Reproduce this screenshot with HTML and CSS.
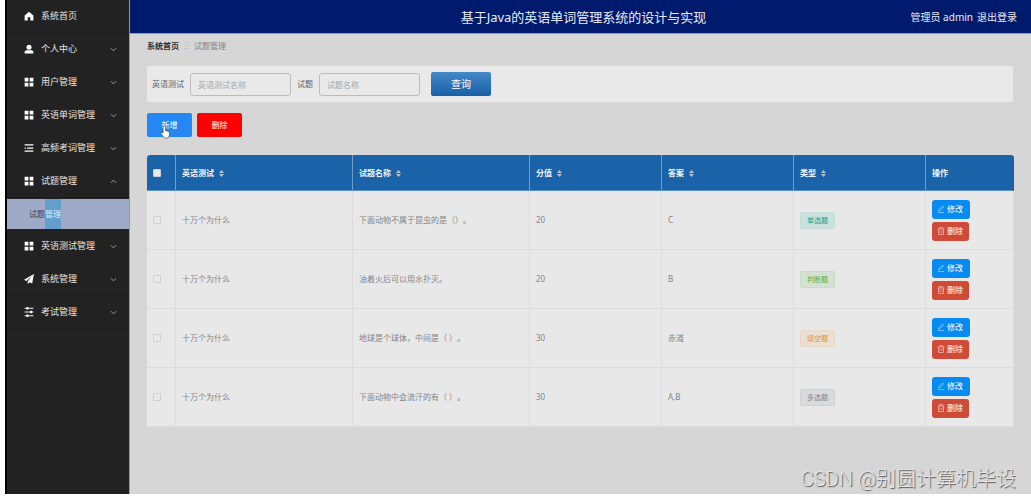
FILE: index.html
```
<!DOCTYPE html>
<html lang="zh-CN">
<head>
    <meta charset="UTF-8">
    <meta name="viewport" content="width=device-width, initial-scale=1.0">
    <title>试题管理</title>
    <link rel="stylesheet" href="styles.css">
</head>
<body>
    <!-- shared icons -->
    <svg class="sprite" aria-hidden="true">
        <symbol id="grid" viewBox="0 0 16 16"><path d="M1 1h6v6H1zM9 1h6v6H9zM1 9h6v6H1zM9 9h6v6H9z"/></symbol>
        <symbol id="down" viewBox="0 0 16 16"><path d="M2 5l6 6 6-6" fill="none" stroke="currentColor" stroke-width="2"/></symbol>
        <symbol id="up" viewBox="0 0 16 16"><path d="M2 11l6-6 6 6" fill="none" stroke="currentColor" stroke-width="2"/></symbol>
        <symbol id="sort" viewBox="0 0 10 14"><path d="M5 0l5 6H0zM5 14l5-6H0z"/></symbol>
        <symbol id="edit" viewBox="0 0 16 16"><path d="M4 9l7-7 2 2-7 7-3 1zM2 15h12" fill="none" stroke="currentColor" stroke-width="1.300"/></symbol>
        <symbol id="trash" viewBox="0 0 16 16"><path d="M1 4h14M5 4V1h6v3M3 4v11h10V4M6 7v5M10 7v5" fill="none" stroke="currentColor" stroke-width="1.300"/></symbol>
    </svg>

    <div class="layout">
        <nav class="sidebar">
            <ul>
                <li><a href="#"><svg class="icon" viewBox="0 0 16 16"><path d="M8 1l7 6v8h-5v-5H6v5H1V7z"/></svg><span>系统首页</span></a></li>
                <li><a href="#"><svg class="icon" viewBox="0 0 16 16"><circle cx="8" cy="5" r="4"/><path d="M1 15v-2c0-2 2-3 4-3h6c2 0 4 1 4 3v2z"/></svg><span>个人中心</span><svg class="arrow"><use href="#down"/></svg></a></li>
                <li><a href="#"><svg class="icon"><use href="#grid"/></svg><span>用户管理</span><svg class="arrow"><use href="#down"/></svg></a></li>
                <li><a href="#"><svg class="icon"><use href="#grid"/></svg><span>英语单词管理</span><svg class="arrow"><use href="#down"/></svg></a></li>
                <li><a href="#"><svg class="icon" viewBox="0 0 16 16"><path d="M1 2h14v2H1zM1 7h2v2H1zM5 7h10v2H5zM1 12h14v2H1z"/></svg><span>高频考词管理</span><svg class="arrow"><use href="#down"/></svg></a></li>
                <li>
                    <a href="#"><svg class="icon"><use href="#grid"/></svg><span>试题管理</span><svg class="arrow"><use href="#up"/></svg></a>
                    <a href="#" class="submenu">试题<span class="selected">管理</span></a>
                </li>
                <li><a href="#"><svg class="icon"><use href="#grid"/></svg><span>英语测试管理</span><svg class="arrow"><use href="#down"/></svg></a></li>
                <li><a href="#"><svg class="icon" viewBox="0 0 16 16"><path d="M16 0L0 9l4 2 8-7-6 8v4l3-3 4 2z"/></svg><span>系统管理</span><svg class="arrow"><use href="#down"/></svg></a></li>
                <li><a href="#"><svg class="icon" viewBox="0 0 16 16"><path d="M1 2h14M1 8h14M1 14h14" stroke="currentColor" stroke-width="1.500"/><path d="M4 0h3v4H4zM10 6h3v4h-3zM4 12h3v4H4z"/></svg><span>考试管理</span><svg class="arrow"><use href="#down"/></svg></a></li>
            </ul>
        </nav>

        <div class="page">
            <header class="header">
                <h1>基于Java的英语单词管理系统的设计与实现</h1>
                <div class="user">
                    <span>管理员 admin</span>
                    <a href="#">退出登录</a>
                </div>
            </header>

            <main class="content">
                <div class="breadcrumb">
                    <a href="#">系统首页</a>
                    <span class="separator">Ξ</span>
                    <span>试题管理</span>
                </div>

                <form class="search">
                    <label for="testName">英语测试</label>
                    <input type="text" id="testName" placeholder="英语测试名称">
                    <label for="questionName">试题</label>
                    <input type="text" id="questionName" placeholder="试题名称">
                    <button type="button" class="btn-search">查询</button>
                </form>

                <div class="actions">
                    <button type="button" class="btn-add">新增
                        <svg class="cursor" viewBox="0 0 16 22"><path d="M5 12V3q0-2 2-2t2 2v6q3-1 3 1 3-1 3 2v4q0 5-5 5-4 0-5-3l-4-5q0-2 2-1z"/></svg>
                    </button>
                    <button type="button" class="btn-remove">删除</button>
                </div>

                <table class="table">
                    <colgroup>
                        <col class="col-check">
                        <col class="col-name">
                        <col class="col-name">
                        <col class="col-mid">
                        <col class="col-mid">
                        <col class="col-mid">
                        <col class="col-ops">
                    </colgroup>
                    <thead>
                        <tr>
                            <th><input type="checkbox" aria-label="全选"></th>
                            <th>英语测试<svg class="sort"><use href="#sort"/></svg></th>
                            <th>试题名称<svg class="sort"><use href="#sort"/></svg></th>
                            <th>分值<svg class="sort"><use href="#sort"/></svg></th>
                            <th>答案<svg class="sort"><use href="#sort"/></svg></th>
                            <th>类型<svg class="sort"><use href="#sort"/></svg></th>
                            <th>操作</th>
                        </tr>
                    </thead>
                    <tbody>
                        <tr>
                            <td><input type="checkbox" aria-label="选择"></td>
                            <td>十万个为什么</td>
                            <td>下面动物不属于昆虫的是（）。</td>
                            <td>20</td>
                            <td>C</td>
                            <td><span class="tag single">单选题</span></td>
                            <td>
                                <div class="ops">
                                    <button type="button" class="btn-edit"><svg><use href="#edit"/></svg>修改</button>
                                    <button type="button" class="btn-delete"><svg><use href="#trash"/></svg>删除</button>
                                </div>
                            </td>
                        </tr>
                        <tr>
                            <td><input type="checkbox" aria-label="选择"></td>
                            <td>十万个为什么</td>
                            <td>油着火后可以用水扑灭。</td>
                            <td>20</td>
                            <td>B</td>
                            <td><span class="tag judge">判断题</span></td>
                            <td>
                                <div class="ops">
                                    <button type="button" class="btn-edit"><svg><use href="#edit"/></svg>修改</button>
                                    <button type="button" class="btn-delete"><svg><use href="#trash"/></svg>删除</button>
                                </div>
                            </td>
                        </tr>
                        <tr>
                            <td><input type="checkbox" aria-label="选择"></td>
                            <td>十万个为什么</td>
                            <td>地球是个球体，中间是（ ）。</td>
                            <td>30</td>
                            <td>赤道</td>
                            <td><span class="tag blank">填空题</span></td>
                            <td>
                                <div class="ops">
                                    <button type="button" class="btn-edit"><svg><use href="#edit"/></svg>修改</button>
                                    <button type="button" class="btn-delete"><svg><use href="#trash"/></svg>删除</button>
                                </div>
                            </td>
                        </tr>
                        <tr>
                            <td><input type="checkbox" aria-label="选择"></td>
                            <td>十万个为什么</td>
                            <td>下面动物中会流汗的有（ ）。</td>
                            <td>30</td>
                            <td>A,B</td>
                            <td><span class="tag multi">多选题</span></td>
                            <td>
                                <div class="ops">
                                    <button type="button" class="btn-edit"><svg><use href="#edit"/></svg>修改</button>
                                    <button type="button" class="btn-delete"><svg><use href="#trash"/></svg>删除</button>
                                </div>
                            </td>
                        </tr>
                    </tbody>
                </table>
            </main>
        </div>
    </div>
    <div class="watermark">CSDN @别圆计算机毕设</div>
</body>
</html>
```
FILE: styles.css
```
* {
    margin: 0;
    padding: 0;
    box-sizing: border-box;
}

body {
    background-color: #fff;
    font-family: "Noto Sans", "Noto Sans CJK SC", sans-serif;
    font-size: 8px;
    line-height: 12px;
    color: #858587;
}

a {
    color: inherit;
    text-decoration: none;
}

button,
input {
    font: inherit;
}

button {
    border: none;
    border-radius: 2px;
    color: #fff;
    cursor: pointer;
}

svg {
    fill: currentColor;
}

.sprite {
    display: none;
}

.layout {
    display: flex;
    min-height: 100vh;
    padding-left: 5px;
    border-bottom: 4px solid #fff;
}

/* sidebar */
.sidebar {
    width: 125px;
    flex-shrink: 0;
    background-color: #222;
    border-left: 2px solid #000;
    border-right: 1px solid #8799c4;
    color: #e6e6e6;
    font-size: 9px;
}

.sidebar ul {
    list-style: none;
}

.sidebar a {
    display: flex;
    align-items: center;
    height: 33px;
    padding: 0 12px 0 17px;
    border-bottom: 1px solid #1d1d1d;
}

.icon {
    width: 10px;
    height: 10px;
    margin-right: 7px;
    color: #fff;
}

.arrow {
    width: 7px;
    height: 7px;
    margin-left: auto;
    color: #aaa;
}

.sidebar .submenu {
    height: 30px;
    margin: 1px 0;
    padding-left: 22px;
    border-bottom: none;
    background-color: #9fa9c8;
    color: #41465a;
    font-size: 8px;
}

.selected {
    height: 100%;
    background-color: #62a0cb;
    color: #dcecf8;
    line-height: 30px;
}

/* header */
.page {
    flex: 1;
    min-width: 0;
    background-color: #d6d6d6;
}

.header {
    display: grid;
    grid-template-columns: 1fr auto 1fr;
    align-items: center;
    height: 34px;
    padding: 0 14px 0 20px;
    background-color: #001a6d;
    border-bottom: 1px solid #8c97c8;
    color: #e8ebf5;
}

.header h1 {
    grid-column: 2;
    font-size: 13px;
    font-weight: normal;
    line-height: 20px;
}

.user {
    display: flex;
    justify-content: flex-end;
    gap: 4px;
    font-size: 10px;
}

/* content */
.content {
    padding: 6px 18px 20px 17px;
}

.breadcrumb {
    display: flex;
    gap: 5px;
    margin-bottom: 14px;
}

.breadcrumb a {
    color: #303133;
    font-weight: bold;
}

.separator {
    color: #b8bcc4;
}

.search {
    display: flex;
    align-items: center;
    height: 36px;
    padding: 0 5px;
    border-radius: 2px;
    background-color: #e9e9e9;
    color: #606266;
}

.search input {
    width: 101px;
    height: 23px;
    margin: 0 6px;
    padding: 0 7px;
    border: 1px solid #bcbcbe;
    border-radius: 3px;
    background-color: #e9e9e9;
}

.search input::placeholder {
    color: #a5a8b0;
}

.btn-search {
    width: 60px;
    height: 24px;
    margin-left: 5px;
    background: linear-gradient(#4488c8, #1860a6);
    font-size: 10px;
}

.actions {
    display: flex;
    gap: 5px;
    margin: 11px 0 18px;
}

.actions button {
    width: 45px;
    height: 24px;
}

.actions .btn-add {
    position: relative;
    background-color: #2487f3;
}

.actions .btn-remove {
    background-color: #ff0000;
}

.cursor {
    position: absolute;
    left: 13px;
    top: 12px;
    width: 10px;
    height: 14px;
    fill: #fff;
    stroke: #333;
    stroke-width: 1;
}

/* table */
.table {
    width: 100%;
    table-layout: fixed;
    border-collapse: separate;
    border-spacing: 0;
    background-color: #e8e8e8;
    text-spacing-trim: space-all;
}

.col-check {
    width: 29px;
}

.col-name {
    width: 177px;
}

.col-mid {
    width: 132px;
}

.col-ops {
    width: 88px;
}

.table th,
.table td {
    padding: 0 6px;
    border-right: 1px solid #dcdcde;
    border-bottom: 1px solid #dcdcde;
    text-align: left;
    vertical-align: middle;
}

.table th {
    height: 36px;
    background-color: #1a63a8;
    border-right-color: #6f9cc8;
    border-bottom-color: #5b90c2;
    color: #f0f4f8;
}

.table th:first-child {
    border-top-left-radius: 3px;
}

.table th:last-child {
    border-right-color: #1a63a8;
    border-top-right-radius: 3px;
}

.table td {
    height: 59px;
}

.table input {
    display: block;
    appearance: none;
    width: 8px;
    height: 8px;
    border: 1px solid #d0d0d4;
    border-radius: 1px;
    background-color: #e9e9e9;
}

.sort {
    width: 5px;
    height: 7px;
    margin-left: 5px;
    vertical-align: middle;
    color: #b4c3d4;
}

.tag {
    display: inline-block;
    height: 17px;
    padding: 0 6px;
    border: 1px solid;
    border-radius: 2px;
    font-size: 7px;
    line-height: 15px;
}

.single {
    background-color: #cbe1de;
    border-color: #c3ddd9;
    color: #1fa08c;
}

.judge {
    background-color: #d6e2d1;
    border-color: #cbdcc4;
    color: #5fac42;
}

.blank {
    background-color: #eadfd2;
    border-color: #e8d7c3;
    color: #dd9440;
}

.multi {
    background-color: #d9dadc;
    border-color: #cfd0d2;
    color: #85878c;
}

.ops {
    display: flex;
    flex-direction: column;
    align-items: flex-start;
    gap: 3px;
}

.ops button {
    display: flex;
    align-items: center;
    gap: 2px;
    height: 19px;
    padding: 0 6px 0 5px;
    border-radius: 3px;
}

.ops svg {
    width: 8px;
    height: 8px;
    opacity: 0.7;
}

.ops .btn-edit {
    padding-right: 7px;
    background-color: #058bf2;
}

.ops .btn-delete {
    background-color: #d04a38;
}

.watermark {
    position: absolute;
    right: 15px;
    bottom: 6px;
    color: #e6e6e6;
    font-family: Roboto, "Noto Sans CJK SC", sans-serif;
    font-size: 20px;
    font-weight: 300;
    line-height: 26px;
    text-shadow: 1px 1px 1px #555;
}
```
